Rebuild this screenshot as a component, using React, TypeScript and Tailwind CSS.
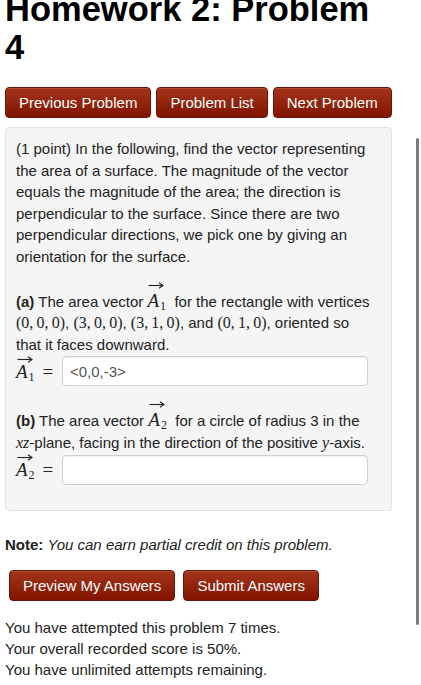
import type { ReactNode } from "react"

const serif = "font-['Liberation_Serif','Times_New_Roman',serif]"

function RedButton({ children }: { children: ReactNode }) {
  return (
    <button className="h-[31px] px-[13px] rounded-[4px] border border-[#6a1607] bg-gradient-to-b from-[#a3341a] to-[#821300] text-white text-[15px] leading-none shadow-[inset_0_1px_0_rgba(255,255,255,0.12)]">
      {children}
    </button>
  )
}

// math-style coordinate tuple, e.g. (3, 1, 0)
function M({ children }: { children: ReactNode }) {
  return <span className={`${serif} text-[16px]`}>{children}</span>
}

function Var({ children }: { children: ReactNode }) {
  return <span className={`${serif} italic text-[16px]`}>{children}</span>
}

// A with subscript and a right arrow drawn over it
function VecA({ sub, lift = 9 }: { sub: string; lift?: number }) {
  return (
    <span className={`${serif} relative inline-block text-[19px] leading-none`}>
      <span className="italic">A</span>
      <span className="text-[12px] relative top-[3px] ml-[1px]">{sub}</span>
      <svg
        className="absolute left-[1px]"
        style={{ top: -lift }}
        width="16"
        height="7"
        viewBox="0 0 16 7"
      >
        <path d="M0.5 3.5H14.5" stroke="#222" strokeWidth="1.1" />
        <path d="M11 0.8L15 3.5L11 6.2" stroke="#222" strokeWidth="1.1" fill="none" />
      </svg>
    </span>
  )
}

function AnswerRow({ sub, value }: { sub: string; value: string }) {
  return (
    <div className="flex items-center h-[32px]">
      <div className="w-[46px] flex items-center">
        <VecA sub={sub} lift={6} />
        <span className={`${serif} text-[19px] leading-none ml-[8px]`}>=</span>
      </div>
      <div className="w-[306px] h-[30px] rounded-[4px] border border-[#cfcfcf] bg-white shadow-[inset_0_1px_1px_rgba(0,0,0,0.06)] flex items-center px-[7px] text-[15px] text-[#555]">
        {value}
      </div>
    </div>
  )
}

export default function App() {
  return (
    <div className="relative w-[421px] h-[685px] overflow-hidden bg-white text-[#222] font-['Liberation_Sans',Arial,sans-serif]">
      <h1 className="-mt-[10px] ml-[5px] w-[387px] text-[34.5px] leading-[38px] font-bold text-black">
        Homework 2: Problem 4
      </h1>

      <div className="mt-[21px] ml-[5px] flex gap-[5px]">
        <RedButton>Previous Problem</RedButton>
        <RedButton>Problem List</RedButton>
        <RedButton>Next Problem</RedButton>
      </div>

      <div className="mt-[9px] ml-[5px] w-[387px] rounded-[4px] border border-[#e3e3e3] bg-[#f5f5f5] px-[10px] pt-[10px] pb-[24px] text-[15px] leading-[21.6px]">
        <p>
          (1 point) In the following, find the vector representing the area of a surface. The
          magnitude of the vector equals the magnitude of the area; the direction is
          perpendicular to the surface. Since there are two perpendicular directions, we pick
          one by giving an orientation for the surface.
        </p>

        <div className="mt-[23px] whitespace-nowrap">
          <b>(a)</b> The area vector <VecA sub="1" />&nbsp; for the rectangle with vertices
          <br />
          <M>(0,&thinsp;0,&thinsp;0)</M>, <M>(3,&thinsp;0,&thinsp;0)</M>,{" "}
          <M>(3,&thinsp;1,&thinsp;0)</M>, and <M>(0,&thinsp;1,&thinsp;0)</M>, oriented so
          <br />
          that it faces downward.
        </div>
        <AnswerRow sub="1" value="<0,0,-3>" />

        <div className="mt-[23px] whitespace-nowrap">
          <b>(b)</b> The area vector <VecA sub="2" />&nbsp; for a circle of radius 3 in the
          <br />
          <Var>xz</Var>-plane, facing in the direction of the positive <Var>y</Var>-axis.
        </div>
        <AnswerRow sub="2" value="" />
      </div>

      <p className="mt-[23px] ml-[5px] text-[15px] leading-[21.6px]">
        <b>Note:</b> <i>You can earn partial credit on this problem.</i>
      </p>

      <div className="mt-[15px] ml-[9px] flex gap-[8px]">
        <RedButton>Preview My Answers</RedButton>
        <RedButton>Submit Answers</RedButton>
      </div>

      <div className="mt-[16px] ml-[5px] text-[15px] leading-[21px]">
        <p>You have attempted this problem 7 times.</p>
        <p>Your overall recorded score is 50%.</p>
        <p>You have unlimited attempts remaining.</p>
      </div>

      {/* scroll indicator */}
      <div className="absolute left-[416px] top-[138px] w-[2.5px] h-[487px] rounded-full bg-[#7c7c7c]" />
    </div>
  )
}
